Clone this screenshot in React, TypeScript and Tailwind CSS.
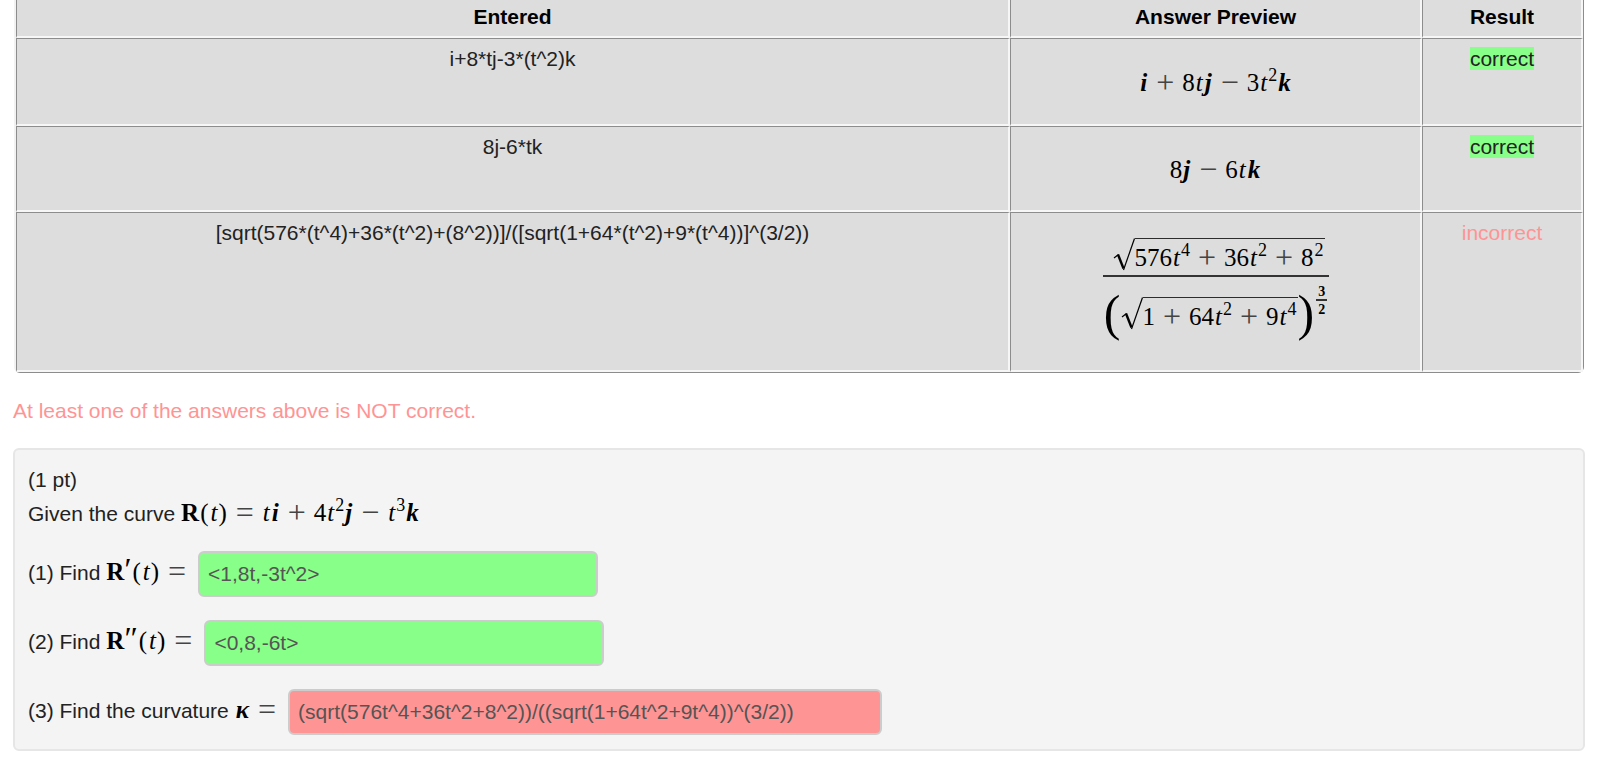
import { useState, type ReactNode } from 'react';

/* Math building blocks */

function Formula({ children }: { children: ReactNode }) {
    return (
        <span className="inline-flex items-baseline whitespace-nowrap font-['Liberation_Serif',serif] text-[25px] leading-8 text-black">
            {children}
        </span>
    );
}

function Op({ children }: { children: ReactNode }) {
    return <span className="mx-2 translate-y-0.5 text-[32px] leading-none text-[#444]">{children}</span>;
}

function Vec({ children }: { children: ReactNode }) {
    return <b className="px-px font-bold italic">{children}</b>;
}

function T({ power }: { power?: string }) {
    return (
        <>
            <i className={power ? 'pl-px' : 'px-px'}>t</i>
            {power && <Sup>{power}</Sup>}
        </>
    );
}

function Sup({ children }: { children: ReactNode }) {
    return <span className="-translate-y-2.5 pl-px text-lg leading-none">{children}</span>;
}

function Prime({ children }: { children: ReactNode }) {
    return <span className="text-[32px] leading-none">{children}</span>;
}

function OfT() {
    return (
        <span className="px-px">
            <span className="pr-px">(</span>
            <T />)
        </span>
    );
}

function Sqrt({ children }: { children: ReactNode }) {
    return (
        <span className="inline-flex items-start">
            <svg width="22" height="33" viewBox="0 0 22 33" fill="none" stroke="black" className="shrink-0">
                <path d="M1 20l4.500-3.500" strokeWidth="1.200" />
                <path d="M5 16.500l5.500 14" strokeWidth="2.400" />
                <path d="M10.500 32L21.500.5" strokeWidth="1.200" />
            </svg>
            <span className="flex h-[33px] items-baseline border-t border-black/80 pr-px leading-[34px]">{children}</span>
        </span>
    );
}

function CurvatureFormula() {
    return (
        <span className="inline-flex flex-col items-center whitespace-nowrap font-['Liberation_Serif',serif] text-[25px] text-black">
            <span className="flex border-b-2 border-[#333] pr-1 pb-1 pl-2.5">
                <Sqrt>
                    576<T power="4" /><Op>+</Op>36<T power="2" /><Op>+</Op>8<Sup>2</Sup>
                </Sqrt>
            </span>
            <span className="flex h-[68px] items-center pt-1">
                <span className="text-[50px] leading-none">(</span>
                <Sqrt>
                    1<Op>+</Op>64<T power="2" /><Op>+</Op>9<T power="4" />
                </Sqrt>
                <span className="text-[50px] leading-none">)</span>
                <span className="ml-0.5 flex flex-col self-start pt-1 text-center text-sm leading-none font-bold">
                    <span className="border-b-2 border-[#333] px-0.5">3</span>
                    <span className="px-0.5 pt-0.5">2</span>
                </span>
            </span>
        </span>
    );
}

/* Results table */

interface Answer {
    entered: string;
    preview: ReactNode;
    correct: boolean;
    height: string;
}

const answers: Answer[] = [
    {
        entered: 'i+8*tj-3*(t^2)k',
        preview: (
            <Formula>
                <Vec>i</Vec><Op>+</Op>8<T /><Vec>j</Vec><Op>−</Op>3<T power="2" /><Vec>k</Vec>
            </Formula>
        ),
        correct: true,
        height: 'h-[88px]',
    },
    {
        entered: '8j-6*tk',
        preview: (
            <Formula>
                8<Vec>j</Vec><Op>−</Op>6<T /><Vec>k</Vec>
            </Formula>
        ),
        correct: true,
        height: 'h-[86px]',
    },
    {
        entered: '[sqrt(576*(t^4)+36*(t^2)+(8^2))]/([sqrt(1+64*(t^2)+9*(t^4))]^(3/2))',
        preview: <CurvatureFormula />,
        correct: false,
        height: 'h-[160px]',
    },
];

const cell = 'border-t border-l border-r-2 border-b-2 border-t-[#8c8c8c] border-l-[#8c8c8c] border-r-[#f6f6f6] border-b-[#f6f6f6]';

function ResultsTable() {
    return (
        <div className="px-px">
            <table className="w-full table-fixed border-separate border-spacing-0 rounded-b-md border-r border-b border-l-2 border-r-[#8c8c8c] border-b-[#8c8c8c] border-l-[#f2f2f2] bg-[#ddd] text-center">
                <colgroup>
                    <col />
                    <col className="w-[412px]" />
                    <col className="w-[161px]" />
                </colgroup>
                <thead>
                    <tr className="h-[38px] text-black">
                        <th className={`${cell} border-t-0 pb-0.5 font-bold`}>Entered</th>
                        <th className={`${cell} border-t-0 pb-0.5 font-bold`}>Answer Preview</th>
                        <th className={`${cell} border-t-0 pb-0.5 font-bold`}>Result</th>
                    </tr>
                </thead>
                <tbody>
                    {answers.map((answer) => (
                        <tr key={answer.entered} className={answer.height}>
                            <td className={`${cell} pt-1.5 align-top`}>{answer.entered}</td>
                            <td className={`${cell} align-middle`}>{answer.preview}</td>
                            <td className={`${cell} pt-1.5 align-top`}>
                                <span className={answer.correct ? 'bg-[#88ff88]' : 'text-[#ff9494]'}>
                                    {answer.correct ? 'correct' : 'incorrect'}
                                </span>
                            </td>
                        </tr>
                    ))}
                </tbody>
            </table>
        </div>
    );
}

/* Problem body */

interface QuestionProps {
    id: string;
    label: ReactNode;
    initial: string;
    inputClass: string;
}

function Question({ id, label, initial, inputClass }: QuestionProps) {
    const [value, setValue] = useState(initial);

    return (
        <div className="flex items-center gap-1">
            <label htmlFor={id} className="flex items-baseline gap-1.5 pb-2 whitespace-nowrap">
                {label}
            </label>
            <input
                id={id}
                type="text"
                value={value}
                onChange={(e) => setValue(e.target.value)}
                className={`h-[46px] rounded-md border-2 border-[#ccc] px-2 text-[#555] ${inputClass}`}
            />
        </div>
    );
}

export default function App() {
    return (
        <main className="bg-white px-[13px] pb-3 font-['Liberation_Sans',Arial,sans-serif] text-[21px] leading-7 text-[#222]">
            <ResultsTable />

            <p className="mt-6 mb-[23px] text-[#ff9494]">At least one of the answers above is NOT correct.</p>

            <section className="rounded-md border-2 border-[#e6e6e6] bg-[#f4f4f4] px-[13px] pt-4 pb-3.5">
                <p>(1 pt)</p>
                <p className="mb-[22px] flex items-baseline gap-1.5">
                    Given the curve
                    <Formula>
                        <b>R</b><OfT /><Op>=</Op><T /><Vec>i</Vec><Op>+</Op>4<T power="2" /><Vec>j</Vec><Op>−</Op><T power="3" /><Vec>k</Vec>
                    </Formula>
                </p>
                <div className="space-y-[23px]">
                    <Question
                        id="answer-1"
                        label={<>(1) Find <Formula><b>R</b><Prime>′</Prime><OfT /><Op>=</Op></Formula></>}
                        initial="<1,8t,-3t^2>"
                        inputClass="w-[400px] bg-[#88ff88]"
                    />
                    <Question
                        id="answer-2"
                        label={<>(2) Find <Formula><b>R</b><Prime>″</Prime><OfT /><Op>=</Op></Formula></>}
                        initial="<0,8,-6t>"
                        inputClass="w-[400px] bg-[#88ff88]"
                    />
                    <Question
                        id="answer-3"
                        label={<>(3) Find the curvature <Formula><Vec>κ</Vec><Op>=</Op></Formula></>}
                        initial="(sqrt(576t^4+36t^2+8^2))/((sqrt(1+64t^2+9t^4))^(3/2))"
                        inputClass="w-[594px] bg-[#ff9494]"
                    />
                </div>
            </section>
        </main>
    );
}
